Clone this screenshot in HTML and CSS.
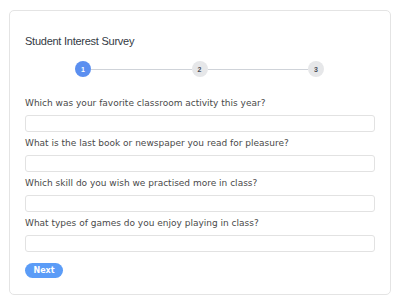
FILE: index.html
```html
<!DOCTYPE html>
<html lang="en">
<head>
    <meta charset="UTF-8">
    <meta name="viewport" content="width=device-width, initial-scale=1.0">
    <title>Student Interest Survey</title>
    <link rel="stylesheet" href="styles.css">
</head>
<body>
    <div class="card">
        <h1 class="title">Student Interest Survey</h1>

        <div class="stepper">
            <span class="step active">1</span>
            <span class="step-line"></span>
            <span class="step">2</span>
            <span class="step-line"></span>
            <span class="step">3</span>
        </div>

        <form class="survey">
            <div class="field">
                <label for="q1">Which was your favorite classroom activity this year?</label>
                <input type="text" id="q1" name="q1">
            </div>
            <div class="field">
                <label for="q2">What is the last book or newspaper you read for pleasure?</label>
                <input type="text" id="q2" name="q2">
            </div>
            <div class="field">
                <label for="q3">Which skill do you wish we practised more in class?</label>
                <input type="text" id="q3" name="q3">
            </div>
            <div class="field">
                <label for="q4">What types of games do you enjoy playing in class?</label>
                <input type="text" id="q4" name="q4">
            </div>
            <button type="button" class="next-button">Next</button>
        </form>
    </div>
</body>
</html>
```

FILE: styles.css
```css
body {
    margin: 0;
    padding: 10px 9px;
    background-color: #ffffff;
    font-family: "Liberation Sans", Arial, sans-serif;
}

.card {
    border: 1px solid #e4e4e4;
    border-radius: 5px;
    padding: 23px 15px 16px 15px;
    height: 285px;
    box-sizing: border-box;
}

.title {
    margin: 0;
    font-size: 11px;
    font-weight: normal;
    letter-spacing: -0.25px;
    color: #333a44;
    line-height: 14px;
}

.stepper {
    display: flex;
    align-items: center;
    margin: 13px 51px 0 50px;
}

.step {
    width: 16px;
    height: 16px;
    border-radius: 50%;
    background-color: #e6e7e9;
    color: #4a4f5a;
    font-size: 7px;
    font-weight: bold;
    display: flex;
    align-items: center;
    justify-content: center;
    flex-shrink: 0;
}

.step.active {
    background-color: #5b8ff0;
    color: #ffffff;
}

.step-line {
    flex: 1;
    height: 1px;
    background-color: #cfd3d9;
}

.survey {
    margin-top: 21px;
}

.field {
    display: flex;
    flex-direction: column;
}

.field label {
    font-family: "DejaVu Sans", Verdana, sans-serif;
    font-size: 9px;
    color: #4a4a4a;
    line-height: 10px;
    margin-bottom: 7px;
}

.field input {
    width: 350px;
    height: 17px;
    border: 1px solid #e2e2e2;
    border-radius: 3px;
    box-sizing: border-box;
    margin: 0 0 6px 0;
    padding: 0 5px;
}

.next-button {
    margin-top: 5px;
    width: 38px;
    height: 15px;
    border: none;
    border-radius: 8px;
    background-color: #5b9cf7;
    color: #ffffff;
    font-family: "DejaVu Sans", Verdana, sans-serif;
    font-size: 8px;
    font-weight: bold;
    padding: 0;
    cursor: pointer;
}
```
